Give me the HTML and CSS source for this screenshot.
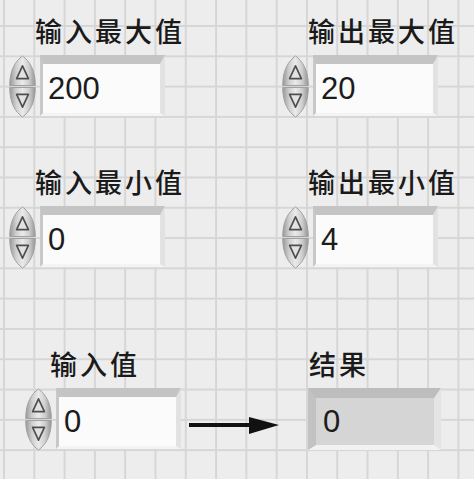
FILE: index.html
```html
<!DOCTYPE html>
<html lang="zh">
<head>
<meta charset="utf-8">
<title>Panel</title>
<link rel="stylesheet" href="styles.css">
</head>
<body>
<svg class="defs" width="0" height="0" aria-hidden="true">
  <defs>
    <linearGradient id="spinfill" x1="0" y1="0" x2="1" y2="0">
      <stop offset="0" stop-color="#989898"/>
      <stop offset="0.25" stop-color="#cfcfcf"/>
      <stop offset="0.5" stop-color="#eaeaea"/>
      <stop offset="0.75" stop-color="#cfcfcf"/>
      <stop offset="1" stop-color="#959595"/>
    </linearGradient>
    <symbol id="spin" viewBox="0 0 34 64">
      <path d="M17 1 C10 6 4 15 4 31 L30 31 C30 15 24 6 17 1 Z" fill="url(#spinfill)" stroke="#a0a0a0" stroke-width="1"/>
      <path d="M4 33 L30 33 C30 49 24 58 17 63 C10 58 4 49 4 33 Z" fill="url(#spinfill)" stroke="#a0a0a0" stroke-width="1"/>
      <path d="M17 11 L11 24 L23 24 Z" fill="#e2e2e2" stroke="#4e4e4e" stroke-width="1.7" stroke-linejoin="round"/>
      <path d="M11 40 L23 40 L17 53 Z" fill="#e2e2e2" stroke="#4e4e4e" stroke-width="1.7" stroke-linejoin="round"/>
    </symbol>
  </defs>
</svg>
<div class="panel">
  <div class="grid2">
    <div class="ctl">
      <div class="label">输入最大值</div>
      <div class="crow">
        <svg class="spin"><use href="#spin"/></svg>
        <div class="frame"><span class="num">200</span></div>
      </div>
    </div>
    <div class="ctl">
      <div class="label">输出最大值</div>
      <div class="crow">
        <svg class="spin"><use href="#spin"/></svg>
        <div class="frame"><span class="num">20</span></div>
      </div>
    </div>
    <div class="ctl">
      <div class="label">输入最小值</div>
      <div class="crow">
        <svg class="spin"><use href="#spin"/></svg>
        <div class="frame"><span class="num">0</span></div>
      </div>
    </div>
    <div class="ctl">
      <div class="label">输出最小值</div>
      <div class="crow">
        <svg class="spin"><use href="#spin"/></svg>
        <div class="frame"><span class="num">4</span></div>
      </div>
    </div>
  </div>
  <div class="row3">
    <div class="ctl ctl-in">
      <div class="label label-in">输入值</div>
      <div class="crow">
        <svg class="spin"><use href="#spin"/></svg>
        <div class="frame"><span class="num">0</span></div>
      </div>
    </div>
    <svg class="wire" width="90" height="63" viewBox="0 0 90 63">
      <path d="M0 37 L62 37" stroke="#111" stroke-width="4"/>
      <path d="M60 29 L90 37 L60 46 Z" fill="#111"/>
    </svg>
    <div class="ctl ctl-out">
      <div class="label label-out">结果</div>
      <div class="crow">
        <div class="indicator"><span class="num">0</span></div>
      </div>
    </div>
  </div>
</div>
</body>
</html>
```

FILE: styles.css
```css
html, body {
  margin: 0;
  padding: 0;
}
body {
  width: 474px;
  height: 479px;
  overflow: hidden;
  background-color: #ededed;
  background-image:
    linear-gradient(to right, #d6d6d6 2px, transparent 2px),
    linear-gradient(to bottom, #d6d6d6 2px, transparent 2px);
  background-size: 30.3px 30.3px;
  background-position: 3px 25px;
  font-family: "Noto Sans CJK SC", "Noto Sans", sans-serif;
  color: #1e1e1e;
}
.defs {
  position: absolute;
  width: 0;
  height: 0;
}
.panel {
  padding: 16px 0 0 5px;
}
.grid2 {
  display: grid;
  grid-template-columns: 273px 1fr;
  row-gap: 49px;
}
.ctl {
  display: flex;
  flex-direction: column;
}
.label {
  height: 30px;
  line-height: 30px;
  font-size: 27px;
  font-weight: 500;
  letter-spacing: 3px;
  margin-left: 30px;
  margin-bottom: 9px;
  white-space: nowrap;
  color: #1a1a1a;
}
.crow {
  display: flex;
  align-items: flex-start;
  height: 63px;
}
.spin {
  width: 35px;
  height: 63px;
  flex: none;
}
.frame {
  box-sizing: border-box;
  width: 125px;
  height: 61px;
  border-top: 9px solid #c4c4c4;
  border-left: 3px solid #c8c8c8;
  border-right: 5px solid #e2e2e2;
  border-bottom: 3px solid #f4f4f4;
  background: #fbfbfb;
  display: flex;
  align-items: center;
  padding-left: 5px;
}
.num {
  font-family: "Liberation Sans", Arial, sans-serif;
  font-size: 31px;
  color: #1c1c1c;
  line-height: 1;
}
.row3 {
  display: flex;
  align-items: flex-end;
  margin-top: 80px;
}
.ctl-in {
  margin-left: 16px;
}
.label-in {
  margin-left: 29px;
}
.wire {
  flex: none;
  margin-left: 8px;
}
.ctl-out {
  margin-left: 29px;
}
.label-out {
  margin-left: 1px;
}
.indicator {
  box-sizing: border-box;
  width: 133px;
  height: 62px;
  border-top: 10px solid #bdbdbd;
  border-left: 8px solid #c2c2c2;
  border-right: 7px solid #e4e4e4;
  border-bottom: 5px solid #f2f2f2;
  background: #d5d5d5;
  display: flex;
  align-items: center;
  padding-left: 7px;
}
```
